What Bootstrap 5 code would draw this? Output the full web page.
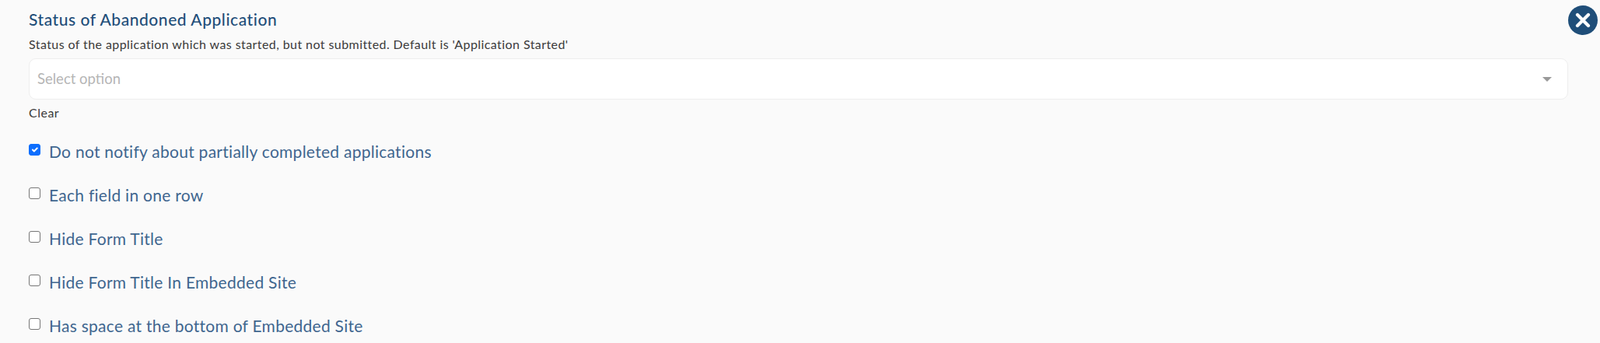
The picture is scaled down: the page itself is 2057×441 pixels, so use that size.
<!DOCTYPE html>
<html lang="en">
<head>
<meta charset="utf-8">
<title>Status of Abandoned Application</title>
<link href="https://cdn.jsdelivr.net/npm/bootstrap@5.3.0/dist/css/bootstrap.min.css" rel="stylesheet">
<style>
html,body{height:441px;overflow:hidden}
body{background:#fafafa;font-family:"Lato","Noto Sans",sans-serif;color:#2d2d2d}
.pane{padding:10px 41px 0 37px;position:relative}
.ttl{font-size:21px;line-height:30px;font-weight:500;color:#1f4e79;margin:0 0 6px;letter-spacing:.55px}
.hint{font-size:16px;line-height:22px;margin:0 0 7px;letter-spacing:.42px;color:#3a3a3a}
.pick{height:53px;border:1px solid #eeeeee;border-radius:9px;padding:0 40px 0 10px;font-size:18.5px;color:#b5b5b5;background-color:#fff;background-image:url("data:image/svg+xml,%3Csvg xmlns='http://www.w3.org/2000/svg' viewBox='0 0 12 6'%3E%3Cpath fill='%23999' d='M0 0h12L6 6z'/%3E%3C/svg%3E");background-size:12px 6px;background-position:right 20px center;box-shadow:none}
.wipe{font-size:16px;line-height:22px;margin:6px 0 0;color:#3a3a3a;letter-spacing:.5px}
.opts{margin-top:24px;display:flex;flex-direction:column;gap:26px}
.opt{display:flex;align-items:flex-start;gap:11px;margin:0;padding:0;min-height:30px}
.opt .form-check-input{width:15px;height:15px;margin:0;margin-top:5px;float:none;border:1.5px solid #767676;border-radius:3px;flex:none}
.opt .form-check-input:checked{background-color:#0d6efd;border-color:#0d6efd}
.opt label{font-size:21px;line-height:30px;color:#3f668f;letter-spacing:.27px}
.shut{position:absolute;top:7px;right:3px;width:38px;height:38px;padding:0;border:0;border-radius:50%;background:#1f4e79;display:flex;align-items:center;justify-content:center}
</style>
</head>
<body>
<div class="pane">
  <button type="button" class="shut" aria-label="Close">
    <svg width="20" height="20" viewBox="0 0 20 20"><path d="M3 3L17 17M17 3L3 17" stroke="#fff" stroke-width="4.2" stroke-linecap="round" fill="none"/></svg>
  </button>
  <h5 class="ttl">Status of Abandoned Application</h5>
  <p class="hint">Status of the application which was started, but not submitted. Default is 'Application Started'</p>
  <select class="form-select pick"><option>Select option</option></select>
  <div class="wipe">Clear</div>
  <div class="opts">
    <div class="form-check opt"><input class="form-check-input" type="checkbox" id="c1" checked><label class="form-check-label" for="c1">Do not notify about partially completed applications</label></div>
    <div class="form-check opt"><input class="form-check-input" type="checkbox" id="c2"><label class="form-check-label" for="c2">Each field in one row</label></div>
    <div class="form-check opt"><input class="form-check-input" type="checkbox" id="c3"><label class="form-check-label" for="c3">Hide Form Title</label></div>
    <div class="form-check opt"><input class="form-check-input" type="checkbox" id="c4"><label class="form-check-label" for="c4">Hide Form Title In Embedded Site</label></div>
    <div class="form-check opt"><input class="form-check-input" type="checkbox" id="c5"><label class="form-check-label" for="c5">Has space at the bottom of Embedded Site</label></div>
  </div>
</div>
<script src="https://cdn.jsdelivr.net/npm/bootstrap@5.3.0/dist/js/bootstrap.bundle.min.js"></script>
</body>
</html>
